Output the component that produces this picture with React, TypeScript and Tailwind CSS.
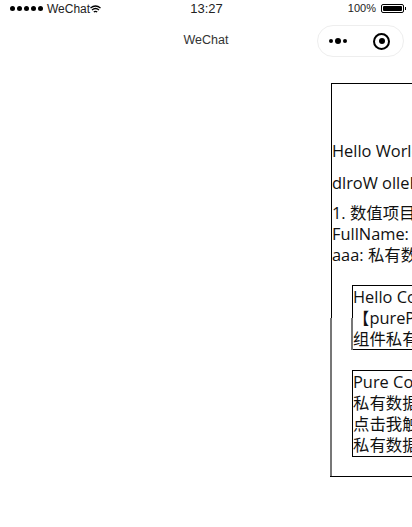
import React from 'react';

const body = '[font-family:"Open_Sans","Noto_Sans_CJK_SC",sans-serif]';

function StatusBar() {
  return (
    <div className="flex h-[17px] items-center justify-between pl-[10px] pr-[6px] text-[12px] text-[#222] [font-family:'Liberation_Sans',sans-serif]">
      <div className="flex w-[124px] items-center">
        <div className="flex gap-[2px]">
          <span className="h-[5px] w-[5px] rounded-full bg-black" />
          <span className="h-[5px] w-[5px] rounded-full bg-black" />
          <span className="h-[5px] w-[5px] rounded-full bg-black" />
          <span className="h-[5px] w-[5px] rounded-full bg-black" />
          <span className="h-[5px] w-[5px] rounded-full bg-black" />
        </div>
        <span className="ml-[4px]">WeChat</span>
        <svg width="11" height="9" viewBox="0 0 11 9" fill="none" stroke="black" strokeWidth="1.3" className="mt-[1px]">
          <path d="M0.5 3 Q5.5 -1 10.5 3" />
          <path d="M2 5 Q5.5 2 9 5" />
          <path d="M3.8 7 Q5.5 5.6 7.2 7" />
        </svg>
      </div>
      <span className="mr-[3px] text-[13px]">13:27</span>
      <div className="flex w-[124px] items-center justify-end">
        <span className="text-[11px]">100%</span>
        <div className="ml-[5px] h-[9px] w-[23px] rounded-[2px] border border-black p-[1px]">
          <div className="h-full w-full rounded-[1px] bg-black" />
        </div>
        <span className="ml-[1px] h-[3px] w-[1px] bg-black" />
      </div>
    </div>
  );
}

function NavBar() {
  return (
    <div className="relative flex h-[47px] items-center justify-center text-[12.5px] text-[#333] [font-family:'Liberation_Sans',sans-serif]">
      <span>WeChat</span>
      <div className="absolute right-[8px] top-[8px] flex h-[32px] w-[87px] items-center rounded-full border border-[#eee] bg-white">
        <div className="ml-[11px] flex items-center gap-[2px]">
          <span className="h-[4px] w-[4px] rounded-full bg-black" />
          <span className="h-[6px] w-[6px] rounded-full bg-black" />
          <span className="h-[4px] w-[4px] rounded-full bg-black" />
        </div>
        <div className="ml-[26px] flex h-[17px] w-[17px] items-center justify-center rounded-full border-2 border-black">
          <span className="h-[6px] w-[6px] rounded-full bg-black" />
        </div>
      </div>
    </div>
  );
}

export default function App() {
  return (
    <div className="h-[527px] w-[412px] overflow-hidden bg-white">
      <StatusBar />
      <NavBar />
      <div className={`relative ml-[331px] mt-[19px] h-[394px] w-[400px] border border-black pt-[56px] text-[16.4px] leading-[21px] text-[#111] ${body}`}>
        <p>Hello World</p>
        <p className="mt-[11px]">dlroW olleH</p>
        <div className="mt-[9px] whitespace-nowrap">
          <p>1. 数值项目</p>
          <p>FullName: Hello</p>
          <p>aaa: 私有数据</p>
        </div>
        <div className="ml-[20px] mt-[20px] h-[65px] border border-black whitespace-nowrap">
          <p>Hello Component</p>
          <p>【purePro</p>
          <p>组件私有数据</p>
        </div>
        <div className="ml-[20px] mt-[20px] h-[87px] border border-black whitespace-nowrap">
          <p>Pure Component</p>
          <p>私有数据</p>
          <p>点击我触发</p>
          <p>私有数据</p>
        </div>
        <span className="absolute left-[-2px] top-[234px] h-[159px] w-[2px] bg-[#777]" />
        <span className="absolute left-[19px] top-[234px] h-[32px] w-[2px] bg-[#777]" />
        <span className="absolute left-[-2px] top-[392px] h-[1px] w-[2px] bg-black" />
      </div>
    </div>
  );
}
